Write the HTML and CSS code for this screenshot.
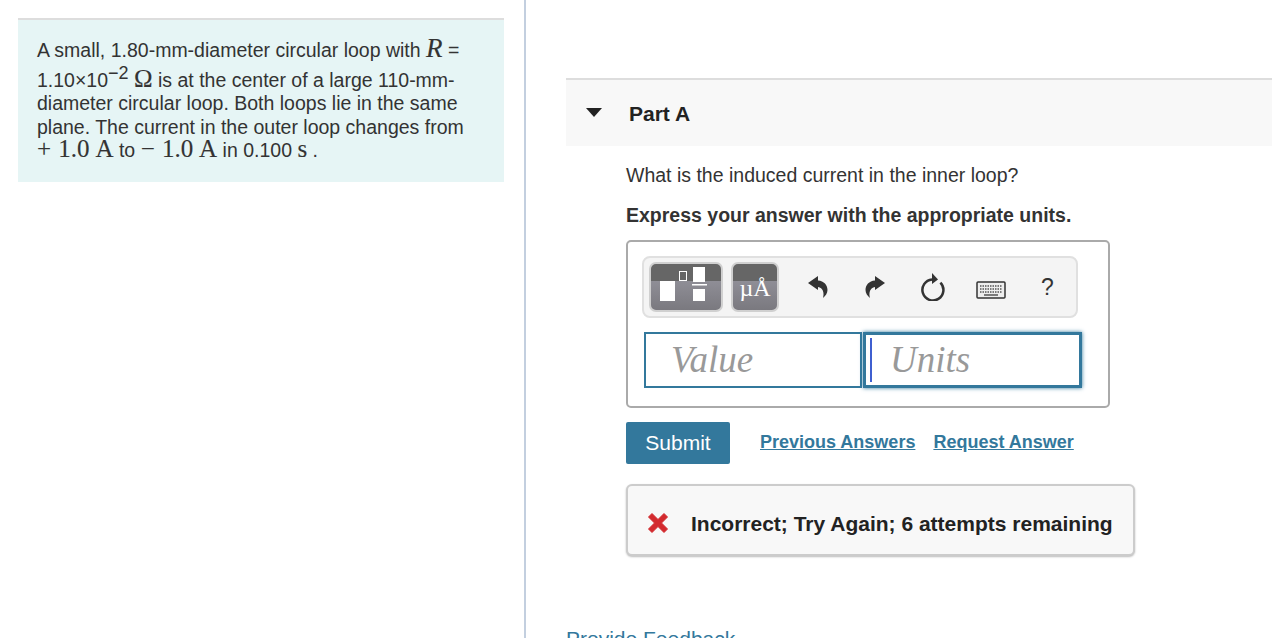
FILE: index.html
```html
<!DOCTYPE html>
<html lang="en">
<head>
    <meta charset="UTF-8">
    <title>Part A</title>
    <link rel="stylesheet" href="styles.css">
</head>
<body>
    <div class="page">
        <div class="left">
            <div class="intro">
                <p>A small, 1.80-mm-diameter circular loop with <i class="math big">R</i> =<br>
                1.10×10<sup>−2</sup> <span class="math">Ω</span> is at the center of a large 110-mm-<br>
                diameter circular loop. Both loops lie in the same<br>
                plane. The current in the outer loop changes from<br>
                <span class="math">+ 1.0 A</span> to <span class="math">− 1.0 A</span> in 0.100 <span class="math">s</span> .</p>
            </div>
        </div>
        <div class="right">
            <div class="part-head">
                <span class="caret"></span>
                <span class="part-title">Part A</span>
            </div>
            <div class="part-body">
                <p class="question">What is the induced current in the inner loop?</p>
                <p class="instruction">Express your answer with the appropriate units.</p>

                <div class="answer-box">
                    <div class="toolbar">
                        <div class="tpl-btn tpl-wide">
                            <svg width="70" height="46" viewBox="0 0 70 46">
                                <rect x="9" y="17" width="15" height="20" fill="#fff"/>
                                <rect x="28.500" y="7.500" width="7" height="9" fill="none" stroke="#fff"/>
                                <rect x="42" y="3" width="12" height="15" fill="#fff"/>
                                <rect x="41" y="20" width="15" height="1.500" fill="#fff"/>
                                <rect x="42" y="25" width="12" height="12" fill="#fff"/>
                            </svg>
                        </div>
                        <div class="tpl-btn tpl-unit">µÅ</div>
                        <div class="tools">
                            <svg class="tool" width="24" height="24" viewBox="0 0 24 24">
                                <path d="M2 8 12 1V5.500C18 6 21.500 10 21.500 15 21.500 18 19.500 21 17 23 18.500 18 17 12.500 12 12V15Z" fill="#333"/>
                            </svg>
                            <svg class="tool" width="24" height="24" viewBox="0 0 24 24">
                                <path d="M22 8 12 1V5.500C6 6 2.500 10 2.500 15 2.500 18 4.500 21 7 23 5.500 18 7 12.500 12 12V15Z" fill="#333"/>
                            </svg>
                            <svg class="tool" width="26" height="28" viewBox="0 0 26 28">
                                <path d="M12 3.500A10.500 10.500 0 1 0 20.400 6.600" fill="none" stroke="#333" stroke-width="2.500" transform="translate(0 3)"/>
                                <path d="M12 0 18 6.500 12 11Z" fill="#333"/>
                            </svg>
                            <svg class="tool kbd" width="30" height="18" viewBox="0 0 30 18">
                                <rect x="1" y="1" width="28" height="16" rx="1" fill="#eee" stroke="#333" stroke-width="1.500"/>
                                <path d="M4 5H26M4 8H26M4 11H26" stroke="#555" stroke-width="1.500" stroke-dasharray="1.500 1"/>
                                <path d="M8 14H22" stroke="#555" stroke-width="1.500"/>
                            </svg>
                            <span class="help">?</span>
                        </div>
                    </div>
                    <div class="inputs">
                        <div class="field">Value</div>
                        <div class="field field-focus"><span class="cursor"></span>Units</div>
                    </div>
                </div>

                <div class="actions">
                    <button class="submit">Submit</button>
                    <a class="action-link first" href="#">Previous Answers</a>
                    <a class="action-link" href="#">Request Answer</a>
                </div>

                <div class="feedback">
                    <svg width="22" height="22" viewBox="0 0 22 22">
                        <path d="M1.500 5 5 1.500 11 7.500 17 1.500 20.500 5 14.500 11 20.500 17 17 20.500 11 14.500 5 20.500 1.500 17 7.500 11Z" fill="#d32a2e" stroke="#d32a2e" stroke-linejoin="round"/>
                    </svg>
                    <span>Incorrect; Try Again; 6 attempts remaining</span>
                </div>

                <a class="provide" href="#">Provide Feedback</a>
            </div>
        </div>
    </div>
</body>
</html>
```

FILE: styles.css
```css
* {
    box-sizing: border-box;
    margin: 0;
    padding: 0;
}

html, body {
    height: 638px;
    overflow: hidden;
    background-color: #fff;
}

body {
    font-family: "Liberation Sans", Arial, sans-serif;
    color: #333;
}

.page {
    display: flex;
    height: 638px;
}

.left {
    width: 526px;
    padding: 18px 20px 0 18px;
    border-right: 2px solid #c3cfdf;
    flex-shrink: 0;
}

.intro {
    height: 164px;
    padding: 19px 19px 0;
    background-color: #e6f5f5;
    border-top: 2px solid #dddddd;
    font-size: 19.500px;
    line-height: 23.500px;
}

.math {
    font-family: "Liberation Serif", serif;
    font-size: 25px;
    line-height: 0;
    word-spacing: 1px;
    -webkit-text-stroke: 0.150px #333;
}

.big {
    font-size: 27px;
}

sup {
    font-size: 18px;
    line-height: 20px;
    vertical-align: 8px;
}

.right {
    flex: 1;
    padding: 78px 0 0 40px;
}

.part-head {
    display: flex;
    align-items: center;
    height: 68px;
    padding-left: 20px;
    background-color: #f8f8f8;
    border-top: 2px solid #dddddd;
}

.caret {
    width: 0;
    height: 0;
    margin-top: -1px;
    border-left: 8px solid transparent;
    border-right: 8px solid transparent;
    border-top: 9px solid #222;
}

.part-title {
    margin: 2px 0 0 27px;
    font-size: 21px;
    font-weight: bold;
    color: #222;
}

.part-body {
    padding: 18px 0 0 60px;
}

.question {
    font-size: 19.500px;
    line-height: 22px;
}

.instruction {
    margin-top: 18px;
    font-size: 19.500px;
    line-height: 22px;
    font-weight: bold;
}

.answer-box {
    width: 484px;
    height: 168px;
    margin-top: 14px;
    padding: 14px 14px 0 14px;
    border: 2px solid #aaaaaa;
    border-radius: 5px;
}

.toolbar {
    display: flex;
    align-items: center;
    width: 436px;
    height: 62px;
    padding-left: 5px;
    background-color: #f4f4f4;
    border: 2px solid #e0e0e0;
    border-radius: 8px;
}

.tpl-btn {
    height: 50px;
    border: 2px solid #d0d0d0;
    border-radius: 7px;
    background: linear-gradient(#666 0, #666 37%, #8f8e96 37%, #7a797f 100%);
    color: #fff;
    overflow: hidden;
}

.tpl-wide {
    width: 74px;
    margin-right: 8px;
}

.tpl-unit {
    width: 48px;
    padding-top: 10px;
    font-family: "Liberation Serif", serif;
    font-size: 24px;
    line-height: 28px;
    text-align: center;
}

.tools {
    display: flex;
    align-items: center;
}

.tool {
    flex-shrink: 0;
}

.tools .tool:nth-child(1) {
    margin-left: 27px;
}

.tools .tool:nth-child(2) {
    margin-left: 33px;
}

.tools .tool:nth-child(3) {
    margin-left: 33px;
}

.tools .tool:nth-child(4) {
    margin-left: 30px;
}

.kbd {
    margin-top: 6px;
}

.help {
    margin-left: 35px;
    font-size: 23px;
    color: #333;
}

.inputs {
    display: flex;
    margin-top: 14px;
    margin-left: 2px;
}

.field {
    position: relative;
    width: 218px;
    height: 56px;
    padding-left: 25px;
    background-color: #fff;
    border: 2px solid #33789c;
    font-family: "Liberation Serif", serif;
    font-style: italic;
    font-size: 37px;
    line-height: 52px;
    color: #999;
}

.field-focus {
    width: 219px;
    margin-left: 1px;
    padding-left: 24px;
    border-width: 3px;
    line-height: 50px;
    box-shadow: 0 0 4px #33789c;
}

.cursor {
    position: absolute;
    left: 4px;
    top: 3px;
    width: 2px;
    height: 44px;
    background-color: #3f5fd0;
}

.actions {
    display: flex;
    align-items: center;
    margin-top: 14px;
}

.submit {
    width: 104px;
    height: 42px;
    border: none;
    border-radius: 2px;
    background-color: #33789c;
    color: #fff;
    font-family: "Liberation Sans", Arial, sans-serif;
    font-size: 21px;
}

.action-link {
    margin: 0 0 2px 18px;
    font-size: 18px;
    font-weight: bold;
    color: #33789c;
}

.first {
    margin-left: 30px;
}

.feedback {
    display: flex;
    align-items: center;
    width: 509px;
    height: 72px;
    margin-top: 20px;
    padding: 8px 0 0 19px;
    background-color: #f8f8f8;
    border: 2px solid #cccccc;
    border-radius: 6px;
    box-shadow: 0 1px 2px #bbb;
    font-size: 21px;
    font-weight: bold;
    color: #222;
}

.feedback svg {
    margin-top: -2px;
}

.feedback span {
    margin-left: 22px;
}

.provide {
    display: block;
    margin: 71px 0 0 -60px;
    font-size: 21px;
    color: #33789c;
    text-decoration: none;
}
```
